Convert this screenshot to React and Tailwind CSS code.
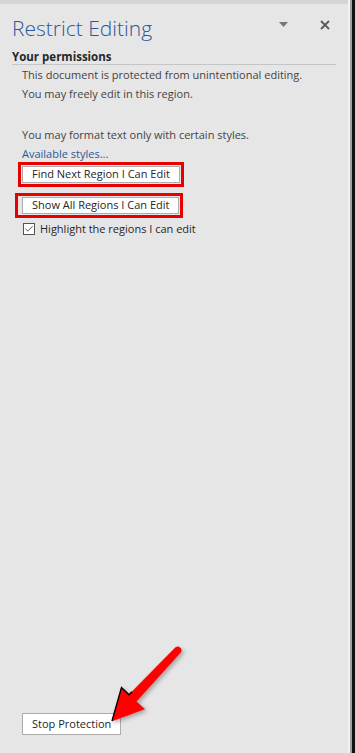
import React from "react";
import { Check } from "lucide-react";

const font = { fontFamily: "'Open Sans', 'Noto Sans', sans-serif" };

const Button = ({ children, className = "" }) => {
  return (
    <div
      className={
        "bg-white border border-[#acacac] px-[9px] flex items-center text-[11px] text-[#262626] w-fit " +
        className
      }
    >
      {children}
    </div>
  );
};

const App = () => {
  return (
    <div
      className="relative w-[355px] h-[753px] bg-[#e6e6e6] flex overflow-hidden"
      style={font}
    >
      <div className="flex-1 flex flex-col border-t-[4px] border-[#d5d5d5]">
        {/* header */}
        <div className="flex items-start pl-[12px] pr-[18px] pt-[10px]">
          <h1 className="flex-1 text-[21px] font-light text-[#2b579a] leading-[28px]">
            Restrict Editing
          </h1>
          <svg width="9" height="5" viewBox="0 0 9 5" className="mt-[8px] mr-[32px]">
            <polygon points="0,0 9,0 4.5,5" fill="#767676" />
          </svg>
          <svg width="10" height="10" viewBox="0 0 10 10" className="mt-[6px]">
            <path d="M1,1 L9,9 M9,1 L1,9" stroke="#5a5a5a" strokeWidth="1.8" />
          </svg>
        </div>

        <div className="mx-[12px] mt-[8px] border-b border-[#c6c6c6]">
          <h2 className="text-[11.5px] font-bold text-[#262626] leading-[14px]">
            Your permissions
          </h2>
        </div>

        <div className="pl-[22px] text-[11px] text-[#444] leading-[19px]">
          <p>This document is protected from unintentional editing.</p>
          <p>You may freely edit in this region.</p>
          <p className="mt-[22px]">You may format text only with certain styles.</p>
          <p className="text-[#2b579a]">Available styles...</p>
        </div>

        <div className="flex flex-col gap-[6px] mt-[-1px]">
          <div className="ml-[18px] w-fit border-[3px] border-[#e60000] p-px">
            <Button className="h-[17px]">Find Next Region I Can Edit</Button>
          </div>
          <div className="ml-[15px] w-fit border-[3px] border-[#e60000] pl-[4px] pr-px py-px">
            <Button className="h-[17px]">Show All Regions I Can Edit</Button>
          </div>
        </div>

        <label className="flex items-center gap-[5px] pl-[23px] mt-[3px] text-[11px] leading-[15px] text-[#262626]">
          <span className="w-[12px] h-[12px] bg-white border border-[#555] flex items-center justify-center">
            <Check size={10} strokeWidth={2} className="text-[#333]" />
          </span>
          Highlight the regions I can edit
        </label>

        <div className="flex-1" />

        <div className="pl-[22px] pb-[18px]">
          <Button className="h-[22px]">Stop Protection</Button>
        </div>
      </div>

      {/* right edge of the pane */}
      <div className="w-[2px] bg-[#f2f2f2]" />
      <div className="w-[2px] bg-[#a0a0a0]" />
      <div className="w-[3px] bg-[#111]" />

      {/* annotation arrow */}
      <svg
        className="absolute left-0 top-0 pointer-events-none"
        width="355"
        height="753"
        viewBox="0 0 355 753"
      >
        <defs>
          <filter id="sh" x="-30%" y="-30%" width="160%" height="160%">
            <feDropShadow dx="2" dy="2" stdDeviation="2" floodColor="#000" floodOpacity="0.3" />
          </filter>
        </defs>
        <g filter="url(#sh)">
          <path
            d="M112,721 L121.5,687.5 L129,694.8 L175.5,647.6 A3.5,3.5 0 0 1 180.5,652.4 L136.2,701.6 L144.5,709 Z"
            fill="#ff0000"
            stroke="#e00000"
            strokeWidth="0.6"
            strokeLinejoin="round"
          />
          <path d="M112,721 L121.5,687.5 L129,694.8 L132,691.8" fill="none" stroke="#000" strokeWidth="1.3" />
        </g>
      </svg>
    </div>
  );
};

export default App;
